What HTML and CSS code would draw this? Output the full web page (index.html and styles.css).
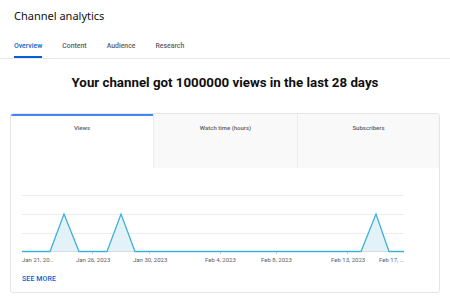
FILE: index.html
```html
<!DOCTYPE html>
<html>
<head>
<meta charset="utf-8">
<link rel="stylesheet" href="styles.css">
</head>
<body>
<header class="top">
  <h1 class="title">Channel analytics</h1>
  <nav class="tabs">
    <span class="tab active">Overview</span>
    <span class="tab">Content</span>
    <span class="tab">Audience</span>
    <span class="tab">Research</span>
  </nav>
</header>
<main class="main">
  <h2 class="headline">Your channel got 1000000 views in the last 28 days</h2>
  <section class="card">
    <div class="metrics">
      <div class="metric selected">Views</div>
      <div class="metric">Watch time (hours)</div>
      <div class="metric">Subscribers</div>
    </div>
    <svg class="chart" width="428" height="100" viewBox="1 0 428 100">
      <g class="grid">
        <line x1="12" y1="27.5" x2="394" y2="27.5"/>
        <line x1="12" y1="46.5" x2="394" y2="46.5"/>
        <line x1="12" y1="65.5" x2="394" y2="65.5"/>
      </g>
      <line class="axis" x1="12" y1="83.5" x2="394" y2="83.5"/>
      <g class="ticks">
        <line x1="82.5" y1="83" x2="82.5" y2="86"/>
        <line x1="139.5" y1="83" x2="139.5" y2="86"/>
        <line x1="210.5" y1="83" x2="210.5" y2="86"/>
        <line x1="266.5" y1="83" x2="266.5" y2="86"/>
        <line x1="337.5" y1="83" x2="337.5" y2="86"/>
      </g>
      <g class="area">
        <polygon points="40,83.5 54,46 69,83.5"/>
        <polygon points="97,83.5 111,46 125,83.5"/>
        <polygon points="351,83.5 366,46 379,83.5"/>
      </g>
      <polyline class="line" points="12,83.5 40,83.5 54,46 69,83.5 97,83.5 111,46 125,83.5 351,83.5 366,46 379,83.5 394,83.5"/>
      <g class="labels">
        <text x="12" y="94">Jan 21, 20…</text>
        <text x="66" y="94">Jan 26, 2023</text>
        <text x="123" y="94">Jan 30, 2023</text>
        <text x="195" y="94">Feb 4, 2023</text>
        <text x="251" y="94">Feb 8, 2023</text>
        <text x="321" y="94">Feb 13, 2023</text>
        <text x="369" y="94">Feb 17, …</text>
      </g>
    </svg>
    <a class="more">SEE MORE</a>
  </section>
</main>
</body>
</html>
```

FILE: styles.css
```css
* { box-sizing: border-box; }
html, body { margin: 0; padding: 0; background: #fff; }
body {
  width: 450px;
  height: 300px;
  overflow: hidden;
  font-family: Roboto, "Liberation Sans", sans-serif;
  color: #0f0f0f;
}
.top {
  border-bottom: 1px solid #e8e8e8;
}
.title {
  margin: 0;
  padding: 8px 0 0 14px;
  font-family: "Noto Sans", Roboto, sans-serif;
  font-size: 11px;
  font-weight: 400;
  line-height: 16px;
  color: #0f0f0f;
}
.tabs {
  display: flex;
  gap: 20px;
  padding: 0 0 0 14px;
  margin-top: 18px;
}
.tab {
  font-size: 6.9px;
  font-weight: 500;
  color: #606060;
  line-height: 9px;
  padding-bottom: 5px;
  border-bottom: 2px solid transparent;
}
.tab.active {
  color: #065fd4;
  border-bottom-color: #065fd4;
}
.main {
  padding: 0 10px 0 10px;
}
.headline {
  margin: 16px 0 0 0;
  text-align: center;
  font-size: 13.3px;
  font-weight: 700;
  line-height: 16px;
  color: #0f0f0f;
}
.card {
  margin-top: 22px;
  width: 430px;
  height: 180px;
  border: 1px solid #e5e5e5;
  border-radius: 3px;
  background: #fff;
  overflow: hidden;
}
.metrics {
  display: grid;
  grid-template-columns: 142px 144px 1fr;
  height: 54px;
}
.metric {
  background: #f9f9f9;
  border-left: 1px solid #ececec;
  font-size: 6px;
  font-weight: 500;
  color: #606060;
  text-align: center;
  padding-top: 10px;
}
.metric.selected {
  background: #fff;
  border-left: none;
  border-top: 2px solid #4285f4;
  padding-top: 8px;
}
.chart {
  display: block;
}
.grid line { stroke: #ececec; stroke-width: 1; }
.axis { stroke: #c8c8c8; stroke-width: 1; }
.ticks line { stroke: #d0d0d0; stroke-width: 1; }
.area polygon { fill: #e3f2f8; }
.line { fill: none; stroke: #41b0d8; stroke-width: 1.3; stroke-linejoin: miter; }
.labels text {
  font-family: Roboto, sans-serif;
  font-size: 6px;
  fill: #606060;
}
.more {
  display: block;
  margin: 7px 0 0 11px;
  font-size: 7px;
  font-weight: 500;
  color: #065fd4;
  letter-spacing: 0.1px;
}
```
